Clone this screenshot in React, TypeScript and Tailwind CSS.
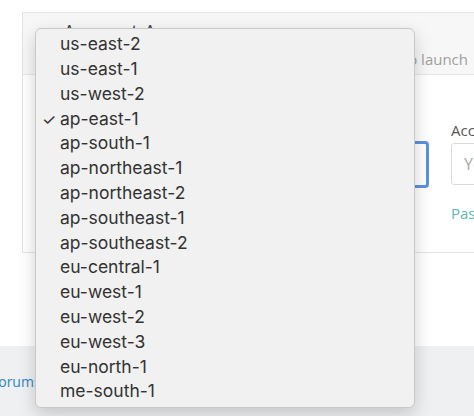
const regions = [
  "us-east-2",
  "us-east-1",
  "us-west-2",
  "ap-east-1",
  "ap-south-1",
  "ap-northeast-1",
  "ap-northeast-2",
  "ap-southeast-1",
  "ap-southeast-2",
  "eu-central-1",
  "eu-west-1",
  "eu-west-2",
  "eu-west-3",
  "eu-north-1",
  "me-south-1",
];

const selected = "ap-east-1";

function RegionMenu() {
  return (
    <div className="absolute left-[35px] top-[28px] w-[380px] h-[380px] rounded-[6px] border border-[#c9c9c9] bg-[#f1f1f1] shadow-[0_6px_18px_rgba(0,0,0,0.18)] pt-[3px] font-['Inter',sans-serif] text-[17.5px] text-[#333]">
      {regions.map((r) => (
        <div key={r} className="flex items-center h-[24.8px]">
          <span className="w-[24px] pl-[6px] text-[16px] text-[#333]">
            {r === selected ? "✓" : ""}
          </span>
          <span>{r}</span>
        </div>
      ))}
    </div>
  );
}

export default function App() {
  return (
    <div className="relative w-[474px] h-[416px] overflow-hidden bg-white font-['Open_Sans',sans-serif]">
      <div className="pt-[12px] pl-[22px]">
        <div className="w-[480px] border border-[#e4e4e4]">
          <div className="h-[62px] bg-[#f7f7f7] border-b border-[#e6e6e6] pl-[40px] pt-[6px]">
            <div className="text-[20px] leading-[26px] text-[#444]">Account Access</div>
            <div className="w-[405px] whitespace-nowrap text-right text-[15px] leading-[22px] text-[#a0a0a0] pt-[3px]">
              Pick a region and an account to launch
            </div>
          </div>
          <div className="h-[177px] bg-white flex pt-[45px] pl-[40px]">
            <div className="w-[366px] shrink-0">
              <div className="text-[15px] text-[#555] h-[21px]">Region</div>
              <div className="h-[47px] rounded-[4px] border-[3px] border-[#5b92e0]" />
            </div>
            <div className="ml-[22px] w-[200px] shrink-0">
              <div className="text-[15px] leading-[21px] text-[#555]">Account</div>
              <div className="mt-[2px] h-[42px] border border-[#dcdcdc] rounded-[3px] flex items-center pl-[12px] text-[16px] text-[#aaa]">
                Your account ID
              </div>
              <div className="mt-[17px] text-[15px] text-[#5bb8b3]">Paste credentials</div>
            </div>
          </div>
        </div>
      </div>
      <div className="mt-[93px] h-[70px] bg-[#eef0f1] flex items-center">
        <span className="-ml-[9px] text-[14px] text-[#2f86c4]">Forums:</span>
      </div>
      <RegionMenu />
    </div>
  );
}
